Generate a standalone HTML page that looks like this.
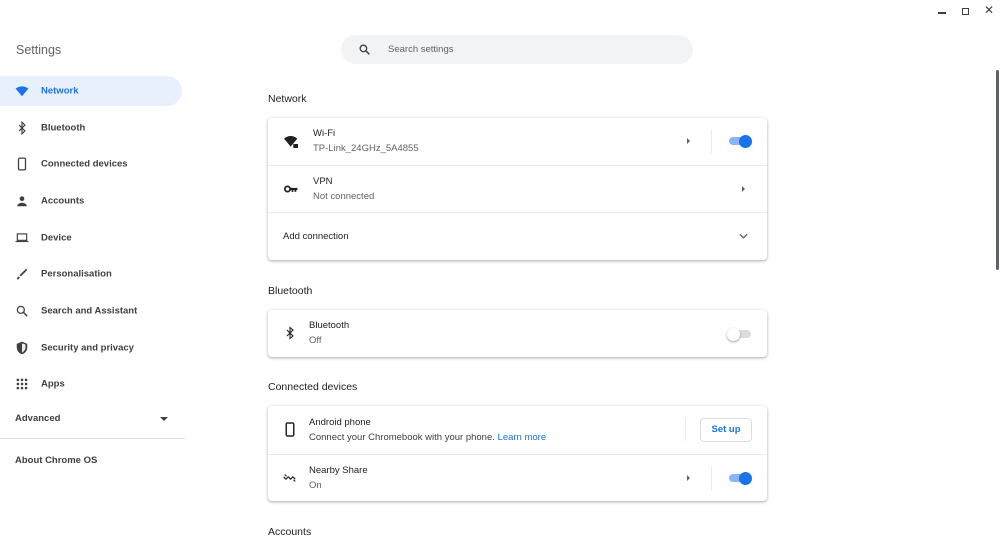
<!DOCTYPE html><html><head><style>
*{margin:0;padding:0;box-sizing:border-box}
body{width:1000px;height:540px;overflow:hidden;background:#fff;font-family:"Liberation Sans",sans-serif;color:#202124;position:relative}
.a{position:absolute}
.nav{position:absolute;left:0;font-size:9.5px;font-weight:bold;color:#3c4043}
.nav .t{position:absolute;left:41px;top:0;white-space:nowrap;transform:translateY(-50%)}
.nav svg{position:absolute;left:15px;top:-7px}
.h{position:absolute;left:268px;font-size:10.5px;color:#202124}
.card{position:absolute;left:268px;width:499px;background:#fff;border-radius:4px;box-shadow:0 1px 2px rgba(60,64,67,.3),0 1px 3px 1px rgba(60,64,67,.12)}
.row{position:relative;border-top:1px solid #e8eaed}
.row:first-child{border-top:none}
.p{position:absolute;font-size:9.5px;color:#202124;white-space:nowrap}
.s{position:absolute;font-size:9.5px;color:#5f6368;white-space:nowrap}
.tog{position:absolute;width:22px;height:8px;border-radius:4px}
.tog i{position:absolute;top:-2.5px;width:13px;height:13px;border-radius:50%}
</style></head><body>
<div class="a" style="left:16px;top:43px;font-size:12.5px;color:#5f6368">Settings</div>
<div class="a" style="left:0;top:76px;width:182px;height:30px;background:#e8f0fe;border-radius:0 15px 15px 0"></div>
<div class="nav" style="top:91px;color:#1a73e8"><svg width="14" height="14" viewBox="0 0 24 24"><path fill="#1a73e8" d="M12 21 1 8c3-2.5 7-4 11-4s8 1.5 11 4z"/></svg><span class="t">Network</span></div>
<div class="nav" style="top:128px"><svg width="14" height="14" viewBox="0 0 24 24"><path fill="none" stroke="#3c4043" stroke-width="2" d="M7 7l10 10-5 5V2l5 5L7 17"/></svg><span class="t">Bluetooth</span></div>
<div class="nav" style="top:164px"><svg width="14" height="14" viewBox="0 0 24 24"><rect x="6" y="2" width="12" height="20" rx="2" fill="none" stroke="#3c4043" stroke-width="2.2"/></svg><span class="t">Connected devices</span></div>
<div class="nav" style="top:201px"><svg width="14" height="14" viewBox="0 0 24 24"><circle cx="12" cy="8" r="4" fill="#3c4043"/><path fill="#3c4043" d="M4 20c0-3 5-5 8-5s8 2 8 5v1H4z"/></svg><span class="t">Accounts</span></div>
<div class="nav" style="top:238px"><svg width="14" height="14" viewBox="0 0 24 24"><rect x="4" y="5" width="16" height="11" fill="none" stroke="#3c4043" stroke-width="2"/><rect x="1" y="17" width="22" height="2" fill="#3c4043"/></svg><span class="t">Device</span></div>
<div class="nav" style="top:274px"><svg width="14" height="14" viewBox="0 0 24 24"><path fill="none" stroke="#3c4043" stroke-width="3" d="M20 4 9 15M7 17l-3 4"/></svg><span class="t">Personalisation</span></div>
<div class="nav" style="top:311px"><svg width="14" height="14" viewBox="0 0 24 24"><circle cx="10" cy="10" r="6" fill="none" stroke="#3c4043" stroke-width="2.2"/><path stroke="#3c4043" stroke-width="2.5" d="M14 14l7 7"/></svg><span class="t">Search and Assistant</span></div>
<div class="nav" style="top:348px"><svg width="14" height="14" viewBox="0 0 24 24"><path fill="#3c4043" d="M12 1 3 5v6c0 6 4 10 9 12 5-2 9-6 9-12V5z"/><path fill="#fff" d="M12 4v16c3-1.5 6-5 6-9V6z" opacity=".9"/></svg><span class="t">Security and privacy</span></div>
<div class="nav" style="top:384px"><svg width="14" height="14" viewBox="0 0 24 24" fill="#3c4043"><rect x="3" y="3" width="4" height="4"/><rect x="10" y="3" width="4" height="4"/><rect x="17" y="3" width="4" height="4"/><rect x="3" y="10" width="4" height="4"/><rect x="10" y="10" width="4" height="4"/><rect x="17" y="10" width="4" height="4"/><rect x="3" y="17" width="4" height="4"/><rect x="10" y="17" width="4" height="4"/><rect x="17" y="17" width="4" height="4"/></svg><span class="t">Apps</span></div>
<div class="a" style="left:15px;top:413px;font-size:9.5px;font-weight:bold;color:#3c4043">Advanced</div>
<div class="a" style="left:160px;top:417px;border-left:4px solid transparent;border-right:4px solid transparent;border-top:4px solid #3c4043"></div>
<div class="a" style="left:0;top:438px;width:185px;height:1px;background:#dadce0"></div>
<div class="a" style="left:15px;top:455px;font-size:9.5px;font-weight:bold;color:#3c4043">About Chrome OS</div>

<div class="a" style="left:341px;top:35px;width:352px;height:29px;background:#f1f3f4;border-radius:15px"></div>
<svg class="a" style="left:358px;top:43px" width="13" height="13" viewBox="0 0 24 24"><circle cx="10" cy="10" r="6" fill="none" stroke="#3c4043" stroke-width="2.4"/><path stroke="#3c4043" stroke-width="2.8" d="M14 14l7 7"/></svg>
<div class="a" style="left:388px;top:44px;font-size:9.5px;color:#5f6368">Search settings</div>

<div class="a" style="left:938px;top:12px;width:8px;height:1.5px;background:#3c4043"></div>
<div class="a" style="left:962px;top:8px;width:7px;height:7px;border:1.5px solid #3c4043"></div>
<div class="a" style="left:984px;top:3px;font-size:12px;color:#3c4043">✕</div>
<div class="a" style="left:996px;top:70px;width:3px;height:200px;background:#5f6368;border-radius:2px"></div>

<div class="h" style="top:93px">Network</div>
<div class="card" style="top:118px;height:142px">
 <div class="row" style="height:47px">
  <svg class="a" style="left:16px;top:17px" width="16" height="14" viewBox="0 0 24 20"><path fill="#202124" d="M10 17 0 5c3-2.5 6-4 10-4s7 1.5 10 4z"/><rect x="14" y="13" width="7" height="6" fill="#202124"/></svg>
  <div class="p" style="left:45px;top:10px">Wi-Fi</div><div class="s" style="left:45px;top:25px">TP-Link_24GHz_5A4855</div>
  <div class="a" style="left:419px;top:20px;border-top:3px solid transparent;border-bottom:3px solid transparent;border-left:3.5px solid #5f6368"></div>
  <div class="a" style="left:443px;top:12px;width:1px;height:23px;background:#e8eaed"></div>
  <div class="tog" style="left:461px;top:19px;background:#8ab4f8"><i style="left:10px;background:#1a73e8"></i></div>
 </div>
 <div class="row" style="height:47px">
  <svg class="a" style="left:16px;top:17px" width="14" height="12" viewBox="0 0 24 20"><circle cx="6" cy="10" r="4.5" fill="none" stroke="#202124" stroke-width="3"/><path fill="#202124" d="M10 8h13v4h-2v3h-3v-3h-2v3h-3v-3h-3z"/></svg>
  <div class="p" style="left:45px;top:10px">VPN</div><div class="s" style="left:45px;top:25px">Not connected</div>
  <div class="a" style="left:474px;top:20px;border-top:3px solid transparent;border-bottom:3px solid transparent;border-left:3.5px solid #5f6368"></div>
 </div>
 <div class="row" style="height:48px">
  <div class="p" style="left:15px;top:18px">Add connection</div>
  <svg class="a" style="left:471px;top:20px" width="9" height="6" viewBox="0 0 10 6"><path d="M1 1l4 4 4-4" fill="none" stroke="#5f6368" stroke-width="1.5"/></svg>
 </div>
</div>

<div class="h" style="top:285px">Bluetooth</div>
<div class="card" style="top:310px;height:47px">
  <svg class="a" style="left:16px;top:16px" width="12" height="14" viewBox="0 0 24 24"><path fill="none" stroke="#202124" stroke-width="2.2" d="M6 6l12 12-6 5V1l6 5L6 18"/></svg>
  <div class="p" style="left:41px;top:10px">Bluetooth</div><div class="s" style="left:41px;top:25px">Off</div>
  <div class="tog" style="left:461px;top:20px;background:#dadce0"><i style="left:-2px;background:#fff;box-shadow:0 1px 2px rgba(0,0,0,.4)"></i></div>
</div>

<div class="h" style="top:381px">Connected devices</div>
<div class="card" style="top:406px;height:95px">
 <div class="row" style="height:48px">
  <svg class="a" style="left:16px;top:16px" width="12" height="15" viewBox="0 0 14 22"><rect x="1.5" y="1.5" width="11" height="19" rx="2" fill="none" stroke="#202124" stroke-width="2.2"/></svg>
  <div class="p" style="left:41px;top:11px">Android phone</div><div class="s" style="left:41px;top:26px;color:#3c4043">Connect your Chromebook with your phone. <span style="color:#1a73e8">Learn more</span></div>
  <div class="a" style="left:417px;top:12px;width:1px;height:23px;background:#e8eaed"></div>
  <div class="a" style="left:432px;top:12px;width:52px;height:24px;border:1px solid #dadce0;border-radius:4px;font-size:9.5px;font-weight:bold;color:#1a73e8;text-align:center;line-height:22px">Set up</div>
 </div>
 <div class="row" style="height:47px">
  <svg class="a" style="left:15px;top:18px" width="14" height="10" viewBox="0 0 24 14"><path fill="none" stroke="#202124" stroke-width="2" d="M1 5l4 4 4-4 4 4 4-4 4 4M3 1l3 3M18 10l3 3"/></svg>
  <div class="p" style="left:41px;top:10px">Nearby Share</div><div class="s" style="left:41px;top:25px">On</div>
  <div class="a" style="left:419px;top:20px;border-top:3px solid transparent;border-bottom:3px solid transparent;border-left:3.5px solid #5f6368"></div>
  <div class="a" style="left:443px;top:12px;width:1px;height:23px;background:#e8eaed"></div>
  <div class="tog" style="left:461px;top:19px;background:#8ab4f8"><i style="left:10px;background:#1a73e8"></i></div>
 </div>
</div>
<div class="h" style="top:526px">Accounts</div>
</body></html>
